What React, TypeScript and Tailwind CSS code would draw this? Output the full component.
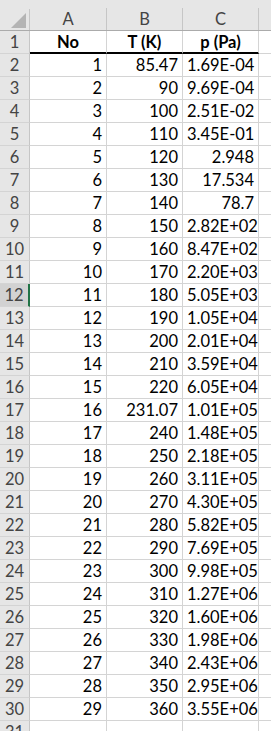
const rows: [string, string, string][] = [
  ["1", "85.47", "1.69E-04"],
  ["2", "90", "9.69E-04"],
  ["3", "100", "2.51E-02"],
  ["4", "110", "3.45E-01"],
  ["5", "120", "2.948"],
  ["6", "130", "17.534"],
  ["7", "140", "78.7"],
  ["8", "150", "2.82E+02"],
  ["9", "160", "8.47E+02"],
  ["10", "170", "2.20E+03"],
  ["11", "180", "5.05E+03"],
  ["12", "190", "1.05E+04"],
  ["13", "200", "2.01E+04"],
  ["14", "210", "3.59E+04"],
  ["15", "220", "6.05E+04"],
  ["16", "231.07", "1.01E+05"],
  ["17", "240", "1.48E+05"],
  ["18", "250", "2.18E+05"],
  ["19", "260", "3.11E+05"],
  ["20", "270", "4.30E+05"],
  ["21", "280", "5.82E+05"],
  ["22", "290", "7.69E+05"],
  ["23", "300", "9.98E+05"],
  ["24", "310", "1.27E+06"],
  ["25", "320", "1.60E+06"],
  ["26", "330", "1.98E+06"],
  ["27", "340", "2.43E+06"],
  ["28", "350", "2.95E+06"],
  ["29", "360", "3.55E+06"],
];

const cols = "grid grid-cols-[30px_77px_76px_76px_1fr]";
const cell = "h-[23px] border-r border-b border-[#d4d4d4] px-[4px] leading-[23px] text-right text-black whitespace-nowrap";

function RowHead({ n, selected }: { n: number; selected?: boolean }) {
  return (
    <div
      className={
        "h-[23px] border-b border-[#d4d4d4] text-center leading-[23px] text-[#444] " +
        (selected ? "bg-[#d2d2d2] border-r-2 border-r-[#217346]" : "bg-[#e6e6e6] border-r border-r-[#c6c6c6]")
      }
    >
      {n}
    </div>
  );
}

export default function App() {
  return (
    <div className="w-[271px] h-[731px] overflow-hidden bg-white text-[16.5px] font-['Lato',sans-serif]">
      {/* Column headers */}
      <div className={cols + " h-[31px] bg-[#e6e6e6] border-b border-[#ababab]"}>
        <div className="relative h-full">
          <svg className="absolute left-[11px] top-[13px]" width="15" height="15" viewBox="0 0 15 15">
            <polygon points="15,0 15,15 0,15" fill="#b4b4b4" />
          </svg>
          <div className="absolute right-0 top-[9px] bottom-0 w-px bg-[#c6c6c6]" />
        </div>
        {["A", "B", "C", ""].map((l, i) => (
          <div key={i} className="flex flex-col justify-end h-full">
            <div
              className={
                "h-[22px] text-center leading-[22px] text-[16.5px] text-[#444] " +
                (i < 3 ? "border-r border-[#c6c6c6]" : "")
              }
            >
              {l}
            </div>
          </div>
        ))}
      </div>

      {/* Row 1: titles */}
      <div className={cols}>
        <RowHead n={1} />
        <div className="h-[23px] border-r border-r-[#d4d4d4] border-b-2 border-b-black text-center font-bold leading-[22px]">No</div>
        <div className="h-[23px] border-r border-r-[#d4d4d4] border-b-2 border-b-black text-center font-bold leading-[22px]">T (K)</div>
        <div className="h-[23px] border-r border-r-[#d4d4d4] border-b-2 border-b-black text-center font-bold leading-[22px]">p (Pa)</div>
        <div className="h-[23px] border-b border-[#d4d4d4]" />
      </div>

      {rows.map((r, i) => (
        <div key={i} className={cols}>
          <RowHead n={i + 2} selected={i + 2 === 12} />
          <div className={cell}>{r[0]}</div>
          <div className={cell}>{r[1]}</div>
          <div className={cell}>{r[2]}</div>
          <div className="h-[23px] border-b border-[#d4d4d4]" />
        </div>
      ))}

      <div className={cols}>
        <RowHead n={31} />
        <div className={cell} />
        <div className={cell} />
        <div className={cell} />
        <div className="h-[23px] border-b border-[#d4d4d4]" />
      </div>
    </div>
  );
}
